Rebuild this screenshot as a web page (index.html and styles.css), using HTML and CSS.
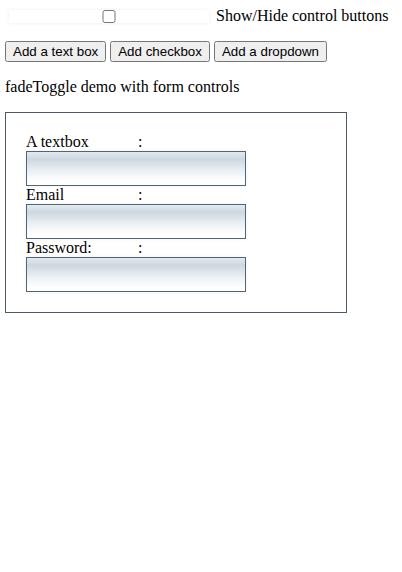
FILE: index.html
```html
<!DOCTYPE html>
<html lang="en">
<head>
    <meta charset="UTF-8">
    <title>fadeToggle demo</title>
    <link rel="stylesheet" href="styles.css">
</head>
<body>
    <div class="toggle-row">
        <input type="checkbox" id="toggleButtons"> <label for="toggleButtons">Show/Hide control buttons</label>
    </div>
    <p class="controls" id="controls">
        <button type="button">Add a text box</button>
        <button type="button">Add checkbox</button>
        <button type="button">Add a dropdown</button>
    </p>
    <p>fadeToggle demo with form controls</p>
    <fieldset class="form-box">
        <div class="field">
            <label class="lbl">A textbox</label>:
            <input type="text" class="txt">
        </div>
        <div class="field">
            <label class="lbl">Email</label>:
            <input type="text" class="txt">
        </div>
        <div class="field">
            <label class="lbl">Password:</label>:
            <input type="password" class="txt">
        </div>
    </fieldset>
</body>
</html>
```

FILE: styles.css
```css
body {
    font-family: 'Liberation Serif', 'Times New Roman', serif;
    font-size: 16px;
    margin: 6px 5px 5px;
    color: #000;
    background: #fff;
}

p {
    margin: 16px 0;
}

input {
    width: 200px;
    box-shadow: 0 0 4px rgba(0, 0, 0, 0.07);
}

.toggle-row {
    padding-top: 1px;
    line-height: 18px;
}

.toggle-row input {
    margin: 3px 3px 3px 4px;
    vertical-align: -2px;
}

.controls {
    margin-top: 15px;
}

.controls button {
    font-family: 'Liberation Sans', Arial, sans-serif;
    font-size: 13.33px;
    height: 21px;
    padding: 1px 6px;
}

.form-box {
    width: 300px;
    margin: 0;
    padding: 20px;
    border: 1px solid #4b5968;
}

.field {
    line-height: 18px;
}

.lbl {
    display: inline-block;
    width: 112px;
}

.txt {
    display: block;
    box-sizing: border-box;
    width: 220px;
    height: 35px;
    margin: 0;
    border: 1px solid #4f6578;
    background: linear-gradient(#e4eaee 0%, #cdd7df 22%, #eef2f5 60%, #ffffff 90%);
    box-shadow: 0 0 4px rgba(0, 0, 0, 0.05);
}
```
